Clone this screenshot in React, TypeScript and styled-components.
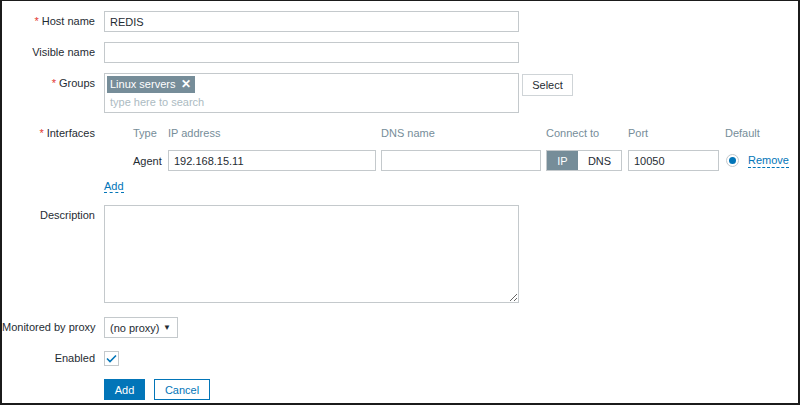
import React from "react";
import styled, { createGlobalStyle } from "styled-components";

const Global = createGlobalStyle`
  html, body { margin: 0; padding: 0; background: #fff; }
  body { font-family: "Liberation Sans", Arial, sans-serif; font-size: 11px; color: #1f2c33; }
  * { box-sizing: border-box; }
`;

const Frame = styled.div`
  width: 800px;
  height: 405px;
  border-style: solid;
  border-color: #1b1b1b;
  border-width: 1px 2px 2px 2px;
  background: #fff;
  overflow: hidden;
`;

const Form = styled.div`
  display: grid;
  grid-template-columns: 93px 1fr;
  column-gap: 9px;
  padding-top: 10px;
  align-items: start;
`;

const Label = styled.div<{ $mt?: number }>`
  text-align: right;
  line-height: 21px;
  height: 21px;
  white-space: nowrap;
  color: #1f2c33;
  margin-top: ${(p) => p.$mt ?? 0}px;
`;

const Req = styled.span`
  color: #e33734;
  margin-right: 3px;
`;

const Field = styled.div<{ $mt?: number }>`
  display: flex;
  align-items: flex-start;
  gap: 3px;
  margin-top: ${(p) => p.$mt ?? 0}px;
`;

const TextInput = styled.input<{ $w: number }>`
  width: ${(p) => p.$w}px;
  height: 21px;
  border: 1px solid #c4c9cc;
  border-radius: 0;
  padding: 0 5px;
  font: inherit;
  font-size: 11px;
  color: #1f2c33;
  background: #fff;
  outline: none;
  margin: 0;
`;

const MultiBox = styled.div`
  width: 415px;
  height: 40px;
  border: 1px solid #c4c9cc;
  padding: 2px 2px;
`;

const Tag = styled.span`
  display: inline-flex;
  align-items: center;
  gap: 6px;
  height: 17px;
  padding: 0 4px 0 3px;
  background: #768d99;
  color: #fff;
  line-height: 17px;
`;

const TagX = styled.span`
  font-weight: bold;
  font-size: 12px;
`;

const Placeholder = styled.div`
  color: #acbbc2;
  padding-left: 3px;
  line-height: 18px;
`;

const GreyButton = styled.button`
  height: 22px;
  width: 51px;
  margin-left: 0;
  margin-top: 1px;
  border: 1px solid #cfd4d7;
  background: #fff;
  color: #1f2c33;
  font: inherit;
  font-size: 11px;
  padding: 0;
`;

const IfaceBlock = styled.div`
  margin-top: 10px;
`;

const IfaceGrid = styled.div`
  display: grid;
  grid-template-columns: 35px 213px 165px 82px 97px auto;
  margin-left: 29px;
  align-items: center;
  row-gap: 6px;
`;

const Head = styled.div`
  color: #768d99;
  line-height: 21px;
`;

const Cell = styled.div<{ $gap?: number }>`
  display: flex;
  align-items: center;
  gap: ${(p) => p.$gap ?? 0}px;
`;

const Toggle = styled.div`
  display: flex;
  width: 76px;
  height: 21px;
  border: 1px solid #c4c9cc;
`;

const Seg = styled.div<{ $on?: boolean; $w: number }>`
  width: ${(p) => p.$w}px;
  display: flex;
  align-items: center;
  justify-content: center;
  background: ${(p) => (p.$on ? "#768d99" : "#fff")};
  color: ${(p) => (p.$on ? "#fff" : "#1f2c33")};
`;

const Radio = styled.span`
  width: 13px;
  height: 13px;
  border-radius: 50%;
  border: 1px solid #c4c9cc;
  display: inline-flex;
  align-items: center;
  justify-content: center;
  margin-left: 1px;
  &::after {
    content: "";
    width: 7px;
    height: 7px;
    border-radius: 50%;
    background: #0275b8;
  }
`;

const DashLink = styled.a`
  color: #0275b8;
  text-decoration: none;
  border-bottom: 1px dashed #0275b8;
  line-height: 13px;
  cursor: pointer;
`;

const AddRow = styled.div`
  margin-top: 9px;
  height: 16px;
`;

const TextArea = styled.textarea`
  width: 415px;
  height: 98px;
  border: 1px solid #c4c9cc;
  resize: both;
  font: inherit;
  margin: 0;
  display: block;
  outline: none;
`;

const SelectBox = styled.div`
  width: 74px;
  height: 21px;
  border: 1px solid #c4c9cc;
  display: flex;
  align-items: center;
  justify-content: space-between;
  padding: 0 6px 0 5px;
`;

const Arrow = styled.span`
  font-size: 8px;
`;

const CheckWrap = styled.div<{ $mt?: number }>`
  height: 21px;
  display: flex;
  align-items: center;
  margin-top: ${(p) => p.$mt ?? 0}px;
`;

const Check = styled.span`
  width: 15px;
  height: 15px;
  border: 1px solid #c4c9cc;
  display: inline-flex;
  align-items: center;
  justify-content: center;
`;

const Buttons = styled.div`
  display: flex;
  gap: 9px;
  margin-top: 10px;
`;

const Btn = styled.button<{ $primary?: boolean; $w: number }>`
  width: ${(p) => p.$w}px;
  height: 21px;
  padding: 0;
  font: inherit;
  font-size: 11px;
  border: 1px solid #0275b8;
  background: ${(p) => (p.$primary ? "#0275b8" : "#fff")};
  color: ${(p) => (p.$primary ? "#fff" : "#0275b8")};
`;

const Empty = styled.div``;

export default function App() {
  return (
    <>
      <Global />
      <Frame>
        <Form>
          <Label><Req>*</Req>Host name</Label>
          <Field><TextInput $w={415} defaultValue="REDIS" /></Field>

          <Label $mt={10}>Visible name</Label>
          <Field $mt={10}><TextInput $w={415} defaultValue="" /></Field>

          <Label $mt={10}><Req>*</Req>Groups</Label>
          <Field $mt={10}>
            <MultiBox>
              <Tag>Linux servers <TagX>✕</TagX></Tag>
              <Placeholder>type here to search</Placeholder>
            </MultiBox>
            <GreyButton>Select</GreyButton>
          </Field>

          <Label $mt={10}><Req>*</Req>Interfaces</Label>
          <IfaceBlock>
            <IfaceGrid>
              <Head>Type</Head>
              <Head>IP address</Head>
              <Head>DNS name</Head>
              <Head>Connect to</Head>
              <Head>Port</Head>
              <Head>Default</Head>
              <Cell>Agent</Cell>
              <Cell><TextInput $w={208} defaultValue="192.168.15.11" /></Cell>
              <Cell><TextInput $w={160} defaultValue="" /></Cell>
              <Cell>
                <Toggle>
                  <Seg $on $w={31}>IP</Seg>
                  <Seg $w={43}>DNS</Seg>
                </Toggle>
              </Cell>
              <Cell><TextInput $w={91} defaultValue="10050" /></Cell>
              <Cell $gap={9}>
                <Radio />
                <DashLink>Remove</DashLink>
              </Cell>
            </IfaceGrid>
            <AddRow><DashLink>Add</DashLink></AddRow>
          </IfaceBlock>

          <Label $mt={9}>Description</Label>
          <Field $mt={9}><TextArea /></Field>

          <Label $mt={14}>Monitored by proxy</Label>
          <Field $mt={14}>
            <SelectBox>
              <span>(no proxy)</span>
              <Arrow>▼</Arrow>
            </SelectBox>
          </Field>

          <Label $mt={10}>Enabled</Label>
          <CheckWrap $mt={10}>
            <Check>
              <svg width="11" height="9" viewBox="0 0 11 9">
                <path d="M1 4.5 L4 7.5 L10 1.5" fill="none" stroke="#0275b8" strokeWidth="1.6" />
              </svg>
            </Check>
          </CheckWrap>

          <Empty />
          <Buttons>
            <Btn $primary $w={41}>Add</Btn>
            <Btn $w={56}>Cancel</Btn>
          </Buttons>
        </Form>
      </Frame>
    </>
  );
}
